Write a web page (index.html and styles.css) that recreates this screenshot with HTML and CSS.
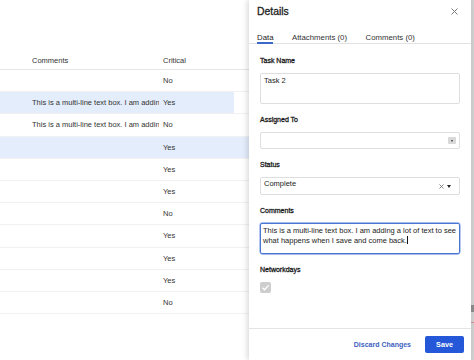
FILE: index.html
```
<!DOCTYPE html>
<html>
<head>
<meta charset="utf-8">
<link rel="stylesheet" href="styles.css">
</head>
<body>
<div class="app">
  <div class="grid">
    <div class="thead">
      <span class="c-com">Comments</span>
      <span class="c-crit">Critical</span>
    </div>
    <div class="row"><span class="c-com"></span><span class="c-crit">No</span></div>
    <div class="row hl-short"><span class="c-com">This is a multi-line text box. I am adding a lot of text to see what happens when I save and come back.</span><span class="c-crit">Yes</span></div>
    <div class="row"><span class="c-com">This is a multi-line text box. I am adding a lot of text to see what happens when I save and come back.</span><span class="c-crit">No</span></div>
    <div class="row hl"><span class="c-com"></span><span class="c-crit">Yes</span></div>
    <div class="row"><span class="c-com"></span><span class="c-crit">Yes</span></div>
    <div class="row"><span class="c-com"></span><span class="c-crit">Yes</span></div>
    <div class="row"><span class="c-com"></span><span class="c-crit">No</span></div>
    <div class="row"><span class="c-com"></span><span class="c-crit">Yes</span></div>
    <div class="row"><span class="c-com"></span><span class="c-crit">Yes</span></div>
    <div class="row"><span class="c-com"></span><span class="c-crit">Yes</span></div>
    <div class="row"><span class="c-com"></span><span class="c-crit">No</span></div>
  </div>
  <div class="scroll"><div class="thumb"></div><div class="redline"></div></div>

  <aside class="panel">
    <div class="p-head">
      <span class="p-title">Details</span>
      <svg class="close" width="7" height="7" viewBox="0 0 7 7"><path d="M0.5 0.5L6.5 6.5M6.5 0.5L0.5 6.5" stroke="#7a7a7a" stroke-width="1"/></svg>
    </div>
    <div class="tabs">
      <span class="tab active">Data</span>
      <span class="tab">Attachments (0)</span>
      <span class="tab">Comments (0)</span>
    </div>
    <div class="p-body">
      <div class="label first">Task Name</div>
      <div class="textbox">Task 2</div>

      <div class="label">Assigned To</div>
      <div class="select assigned"><span class="ddbtn"><span class="tri"></span></span></div>

      <div class="label">Status</div>
      <div class="select status">
        <span class="sel-text">Complete</span>
        <svg class="clear" width="5" height="5" viewBox="0 0 5 5"><path d="M0.5 0.5L4.5 4.5M4.5 0.5L0.5 4.5" stroke="#777" stroke-width="0.9"/></svg>
        <span class="tri dark"></span>
      </div>

      <div class="label">Comments</div>
      <div class="textbox focus">This is a multi-line text box. I am adding a lot of text to see<br>what happens when I save and come back.<span class="caret"></span></div>

      <div class="label">Networkdays</div>
      <div class="check"><svg width="11" height="11" viewBox="0 0 11 11"><path d="M2.5 5.8L4.5 7.8L8.6 3.4" stroke="#fff" stroke-width="1.3" fill="none"/></svg></div>
    </div>
    <div class="p-foot">
      <span class="discard">Discard Changes</span>
      <span class="save">Save</span>
    </div>
  </aside>
</div>
</body>
</html>
```
FILE: styles.css
```
html, body {
  margin: 0;
  padding: 0;
  background: #fff;
}
body {
  width: 474px;
  height: 360px;
  overflow: hidden;
  font-family: "Liberation Sans", Arial, sans-serif;
  color: #333;
}
.app {
  position: relative;
  display: flex;
  height: 360px;
}
.grid {
  flex: 1;
  padding-top: 52px;
  font-size: 7.5px;
}
.thead {
  display: flex;
  align-items: center;
  height: 17px;
  border-bottom: 1px solid #e6e6e6;
}
.row {
  display: flex;
  align-items: center;
  height: 21.2px;
  border-bottom: 1px solid #f1f1f1;
}
.row.hl {
  background: #e3edfb;
}
.row.hl-short {
  background: linear-gradient(to right, #e3edfb 234px, transparent 234px);
}
.c-com {
  margin-left: 32px;
  width: 127px;
  overflow: hidden;
  white-space: nowrap;
}
.c-crit {
  margin-left: 4px;
}
.scroll {
  width: 3px;
  background: #cfcfcf;
  display: flex;
  flex-direction: column;
}
.thumb {
  margin-top: 305px;
  height: 7px;
  background: #8a8a8a;
}
.redline {
  margin-top: 10px;
  height: 1px;
  background: #d88;
}

/* Panel */
.panel {
  position: absolute;
  top: 0;
  bottom: 0;
  left: 249px;
  width: 222px;
  background: #fff;
  box-shadow: -2px 0 5px rgba(0, 0, 0, 0.14);
  display: flex;
  flex-direction: column;
  color: #222;
}
.p-head {
  height: 22px;
  display: flex;
  align-items: center;
  justify-content: space-between;
  padding: 0 13px 0 8px;
}
.p-title {
  font-size: 10.4px;
  color: #222;
  -webkit-text-stroke: 0.3px #222;
}
.tabs {
  height: 21px;
  display: flex;
  gap: 18.5px;
  padding-left: 8px;
  border-bottom: 1px solid #e2e2e2;
  font-size: 7.8px;
}
.tab {
  padding-top: 11px;
  line-height: 9px;
  height: 9px;
  border-bottom: 2px solid transparent;
  margin-bottom: -1px;
  color: #333;
}
.tab.active {
  border-bottom-color: #3b66cc;
  color: #222;
}
.p-body {
  padding: 0 11px;
  display: flex;
  flex-direction: column;
}
.label {
  font-size: 7px;
  line-height: 8px;
  color: #1a1a1a;
  -webkit-text-stroke: 0.3px #1a1a1a;
  margin: 12px 0 8px;
}
.label.first {
  margin-top: 13px;
}
.textbox {
  height: 25px;
  border: 1px solid #dedede;
  border-radius: 2px;
  padding: 2px 3px;
  font-size: 7.5px;
  line-height: 9.5px;
  color: #222;
  white-space: nowrap;
  overflow: hidden;
}
.textbox.focus {
  border-color: #4a76d4;
  box-shadow: 0 0 0 0.4px #4a76d4;
  padding-left: 2px;
}
.caret {
  display: inline-block;
  width: 0;
  height: 8px;
  border-left: 1px solid #111;
  vertical-align: -1px;
}
.select {
  border: 1px solid #dedede;
  border-radius: 2px;
  display: flex;
  font-size: 7.5px;
  color: #222;
}
.select.assigned {
  height: 15px;
  justify-content: flex-end;
  align-items: center;
  padding-right: 3px;
}
.ddbtn {
  width: 8px;
  height: 7px;
  background: #d9d9d9;
  border-radius: 1px;
  display: flex;
  align-items: center;
  justify-content: center;
}
.tri {
  width: 0;
  height: 0;
  border-left: 1.5px solid transparent;
  border-right: 1.5px solid transparent;
  border-top: 2px solid #333;
}
.tri.dark {
  border-left-width: 2.5px;
  border-right-width: 2.5px;
  border-top-width: 3px;
  border-top-color: #222;
  margin-left: 3px;
}
.select.status {
  height: 16px;
  align-items: center;
  padding: 0 8px 0 3px;
}
.sel-text {
  flex: 1;
  align-self: flex-start;
  padding-top: 1px;
  line-height: 9px;
}
.clear {
  display: block;
  margin-top: 1px;
}
.check {
  width: 11px;
  height: 11px;
  background: #cdcdcd;
  border-radius: 2px;
}
.check svg {
  display: block;
}
.p-foot {
  margin-top: auto;
  border-top: 1px solid #e4e4e4;
  padding: 7px 7px 7px;
  display: flex;
  justify-content: flex-end;
  align-items: center;
  gap: 14px;
}
.discard {
  font-size: 7px;
  font-weight: bold;
  color: #3d5fc2;
}
.save {
  width: 39px;
  height: 17px;
  background: #2458d8;
  border-radius: 2px;
  color: #fff;
  font-size: 7.2px;
  font-weight: bold;
  display: flex;
  align-items: center;
  justify-content: center;
}
```
